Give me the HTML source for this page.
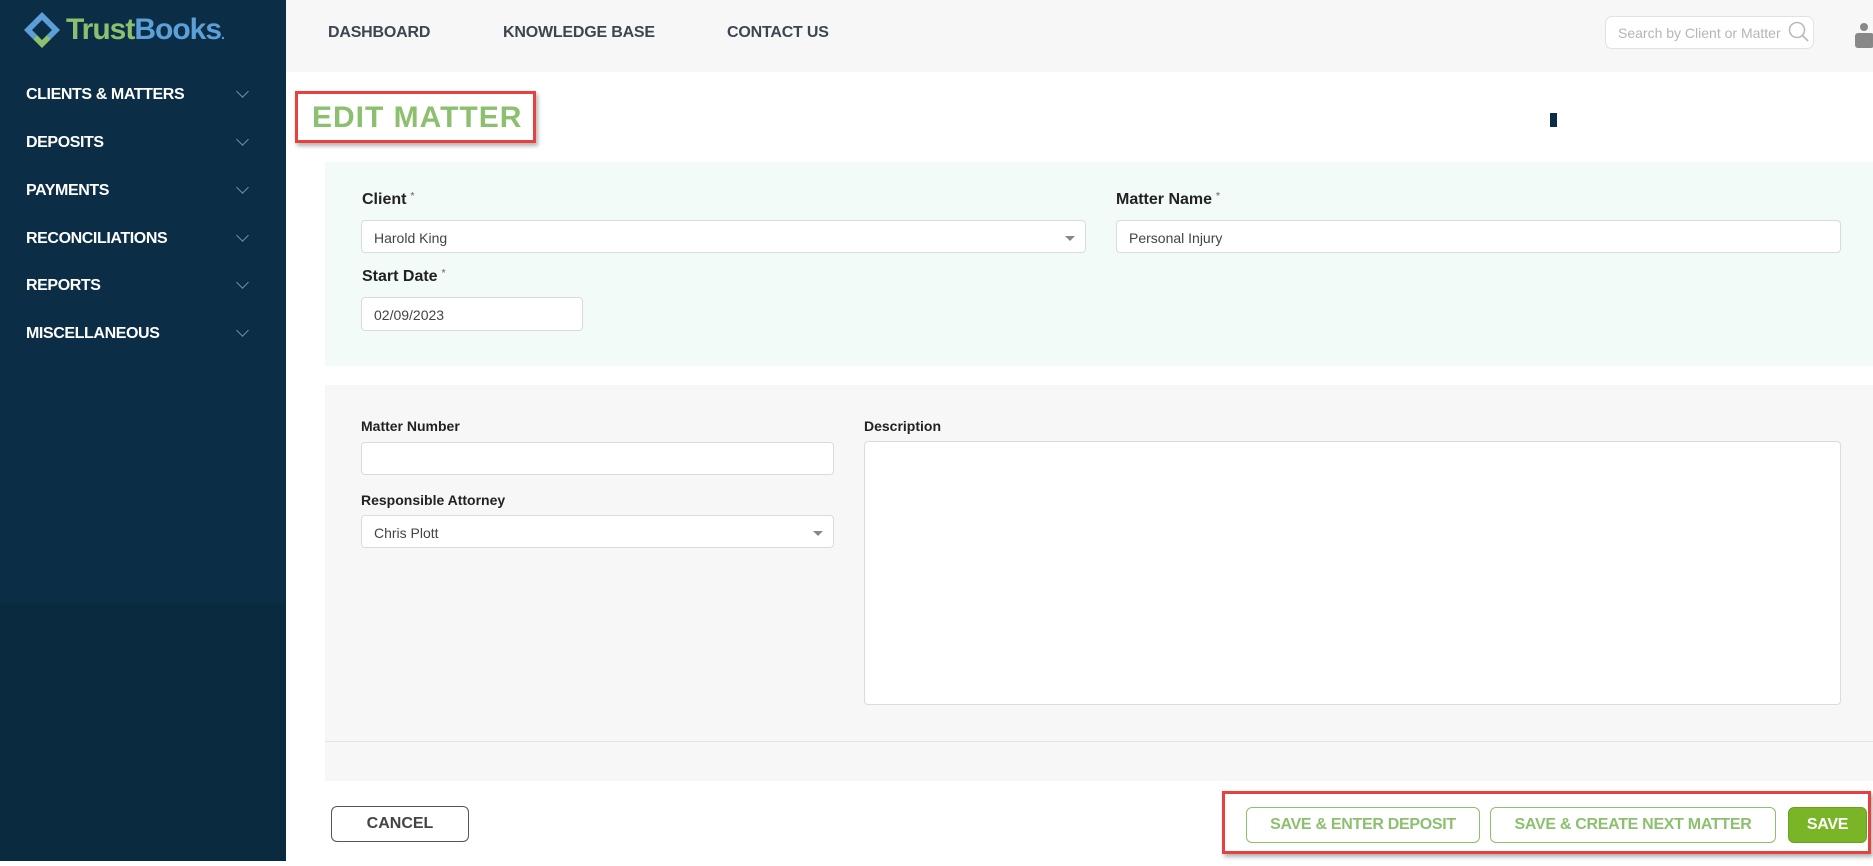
<!DOCTYPE html>
<html><head><style>
*{box-sizing:border-box;margin:0;padding:0}
body{width:1873px;height:866px;position:relative;background:#fff;font-family:"Liberation Sans",Arial,sans-serif;overflow:hidden}
.a{position:absolute}
#side{left:0;top:0;width:286px;height:866px;background:#0b2d45}
.si{position:absolute;left:26px;color:#fff;font-weight:bold;font-size:16px;letter-spacing:-0.4px}
.ch{position:absolute;left:238px;width:9px;height:9px;border-right:1.5px solid #7a8c99;border-bottom:1.5px solid #7a8c99;transform:rotate(45deg)}
#top{left:286px;top:0;width:1587px;height:72px;background:#f7f7f7}
.nav{position:absolute;top:24px;font-weight:bold;font-size:16px;color:#3c4650;letter-spacing:-0.2px}
.lbl{position:absolute;font-weight:bold;font-size:16px;color:#222}
.lbl2{position:absolute;font-weight:bold;font-size:14px;color:#222}
.req{color:#888;font-size:10px;vertical-align:top;margin-left:4px}
.inp{position:absolute;background:#fff;border:1px solid #d6dde0;border-radius:4px;font-size:14px;color:#444;padding:9px 12px}
.car{position:absolute;right:10px;top:15px;border-left:5px solid transparent;border-right:5px solid transparent;border-top:5px solid #888}
.btn{position:absolute;border:1px solid #8cc06e;border-radius:6px;color:#8cc06e;font-weight:bold;font-size:16px;text-align:center;line-height:34px;background:#fff;letter-spacing:-0.3px}
</style></head><body>
<div id="side" class="a">
 <svg class="a" style="left:23px;top:11px" width="38" height="38" viewBox="0 0 38 38"><path d="M19 1 L28 10 L24 14 L19 9 L14 14 L10 10Z" fill="#5da0d8"/><path d="M1 19 L10 10 L14 14 L9 19 L14 24 L10 28Z" fill="#5da0d8"/><path d="M37 19 L28 10 L24 14 L29 19 L24 24 L28 28Z" fill="#5da0d8"/><path d="M19 37 L10 28 L14 24 L19 29 L24 24 L28 28Z" fill="#8cc06e"/></svg>
 <div class="a" style="left:66px;top:13px;font-size:30px;font-weight:bold;letter-spacing:-1px"><span style="color:#8cc06e">Trust</span><span style="color:#5da0d8">Books</span><span style="color:#5da0d8;font-size:14px">.</span></div>
 <div class="si" style="top:86px">CLIENTS &amp; MATTERS</div><div class="ch" style="top:87px"></div>
 <div class="si" style="top:134px">DEPOSITS</div><div class="ch" style="top:135px"></div>
 <div class="si" style="top:182px">PAYMENTS</div><div class="ch" style="top:183px"></div>
 <div class="si" style="top:230px">RECONCILIATIONS</div><div class="ch" style="top:231px"></div>
 <div class="si" style="top:277px">REPORTS</div><div class="ch" style="top:278px"></div>
 <div class="si" style="top:325px">MISCELLANEOUS</div><div class="ch" style="top:326px"></div>
 <div class="a" style="left:0;top:603px;width:286px;height:258px;background:#0a2a40"></div>
 <div class="a" style="left:0;top:861px;width:286px;height:5px;background:#fff"></div>
</div>
<div id="top" class="a">
 <div class="nav" style="left:42px">DASHBOARD</div>
 <div class="nav" style="left:217px">KNOWLEDGE BASE</div>
 <div class="nav" style="left:441px">CONTACT US</div>
 <div class="a" style="left:1319px;top:16px;width:209px;height:33px;background:#fff;border:1px solid #e2e2e2;border-radius:7px;font-size:14px;color:#b5b5b5;padding:8px 12px">Search by Client or Matter</div>
 <svg class="a" style="left:1502px;top:21px" width="22" height="22" viewBox="0 0 22 22"><circle cx="9" cy="9" r="7.5" fill="none" stroke="#bbb" stroke-width="1.6"/><path d="M14.5 14.5 L20 20" stroke="#bbb" stroke-width="1.8"/></svg>
 <svg class="a" style="left:1568px;top:22px" width="20" height="26" viewBox="0 0 20 26"><circle cx="10" cy="5" r="4" fill="#888"/><rect x="1" y="11" width="19" height="15" rx="3" fill="#888"/></svg>
</div>
<div class="a" style="left:295px;top:91px;width:241px;height:52px;border:3px solid #e8403f;box-shadow:2px 3px 4px rgba(0,0,0,.3)"></div>
<div class="a" style="left:312px;top:101px;font-size:30px;font-weight:900;color:#8cc06e;letter-spacing:1px">EDIT MATTER</div>
<div class="a" style="left:1550px;top:113px;width:7px;height:14px;background:#0b2d45"></div>

<div class="a" style="left:325px;top:162px;width:1548px;height:204px;background:#f2fbf7"></div>
<div class="lbl" style="left:362px;top:191px">Client<span class="req">*</span></div>
<div class="inp" style="left:361px;top:220px;width:725px;height:33px">Harold King<div class="car"></div></div>
<div class="lbl" style="left:1116px;top:191px">Matter Name<span class="req">*</span></div>
<div class="inp" style="left:1116px;top:220px;width:725px;height:33px">Personal Injury</div>
<div class="lbl" style="left:362px;top:268px">Start Date<span class="req">*</span></div>
<div class="inp" style="left:361px;top:297px;width:222px;height:34px">02/09/2023</div>

<div class="a" style="left:325px;top:385px;width:1548px;height:396px;background:#f7f7f7"></div>
<div class="a" style="left:325px;top:741px;width:1548px;height:1px;background:#e3e3e3"></div>
<div class="lbl2" style="left:361px;top:418px">Matter Number</div>
<div class="inp" style="left:361px;top:442px;width:473px;height:33px"></div>
<div class="lbl2" style="left:361px;top:492px">Responsible Attorney</div>
<div class="inp" style="left:361px;top:515px;width:473px;height:33px">Chris Plott<div class="car"></div></div>
<div class="lbl2" style="left:864px;top:418px">Description</div>
<div class="inp" style="left:864px;top:441px;width:977px;height:264px"></div>

<div class="a" style="left:331px;top:806px;width:138px;height:36px;border:1px solid #555;border-radius:6px;text-align:center;line-height:34px;font-weight:bold;font-size:16px;color:#444">CANCEL</div>
<div class="a" style="left:1222px;top:791px;width:649px;height:63px;border:3px solid #e8403f;box-shadow:2px 3px 4px rgba(0,0,0,.3)"></div>
<div class="btn" style="left:1246px;top:807px;width:234px;height:36px">SAVE &amp; ENTER DEPOSIT</div>
<div class="btn" style="left:1490px;top:807px;width:286px;height:36px">SAVE &amp; CREATE NEXT MATTER</div>
<div class="btn" style="left:1788px;top:807px;width:79px;height:36px;background:#7ab527;border-color:#6da020;color:#fff">SAVE</div>
</body></html>
